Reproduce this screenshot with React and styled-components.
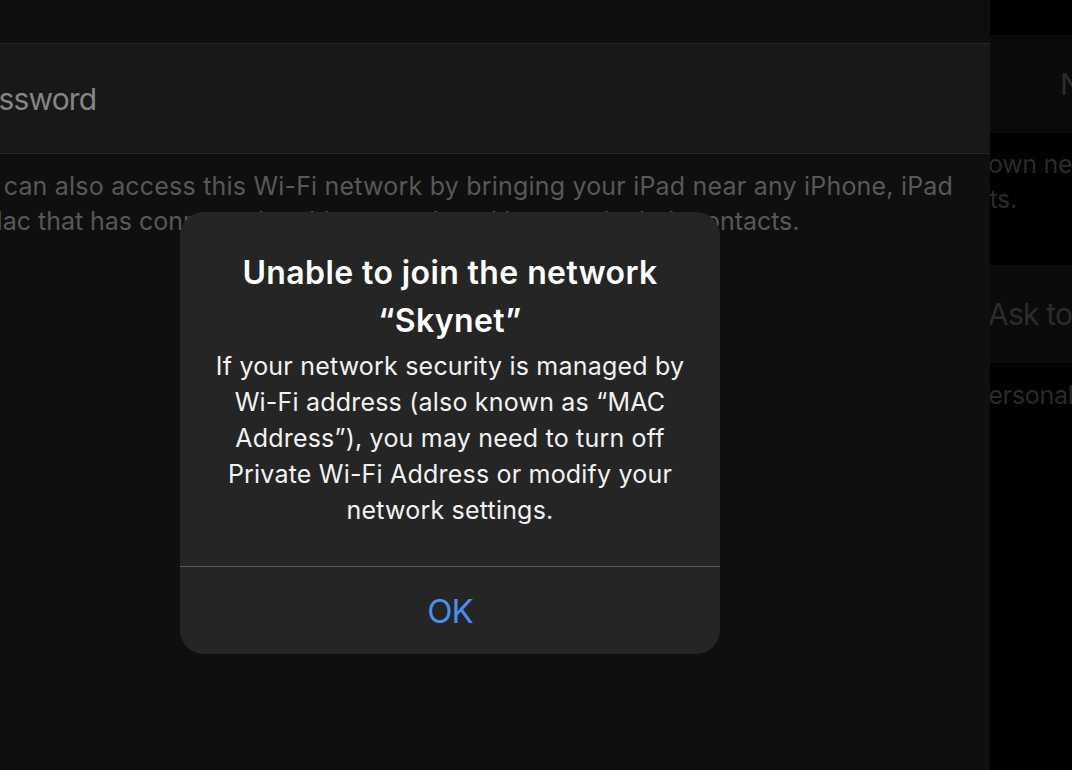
import React from 'react';
import styled, {createGlobalStyle} from "styled-components";

const Global = createGlobalStyle`
  html, body {
    margin: 0;
    padding: 0;
    background: #000;
  }
  body {
    font-family: Inter, "Noto Sans", "Liberation Sans", sans-serif;
    -webkit-font-smoothing: antialiased;
  }
`;

const App = () => {
	return (<Screen>
			<Global />
			<Sheet>
				<TopGap />
				<FieldRow>
					<FieldLabel>Password</FieldLabel>
				</FieldRow>
				<SheetFooter>
					<FooterLine $shift={-49} $spacing={0.2}>You can also access this Wi-Fi network by bringing your iPad near any iPhone, iPad</FooterLine>
					<FooterLine $shift={-51} $spacing={-0.04}>or Mac that has connected to this network and has you in their contacts.</FooterLine>
				</SheetFooter>
			</Sheet>

			<Behind>
				<BehindCard $top={35}>
					<BehindTitle $shift={70}>Networks</BehindTitle>
				</BehindCard>
				<BehindNote $shift={-33} $top={14}>Known networks will be joined automatically.</BehindNote>
				<BehindNote $shift={-80}>hotspots.</BehindNote>
				<BehindCard $top={48}>
					<BehindTitle $shift={-2}>Ask to Join Networks</BehindTitle>
				</BehindCard>
				<BehindNote $shift={-17} $top={15}>Personal Hotspot</BehindNote>
			</Behind>

			<Alert>
				<AlertBody>
					<AlertTitle>Unable to join the network<br />“Skynet”</AlertTitle>
					<AlertMessage>
						If your network security is managed by<br />
						Wi-Fi address (also known as “MAC<br />
						Address”), you may need to turn off<br />
						Private Wi-Fi Address or modify your<br />
						network settings.
					</AlertMessage>
				</AlertBody>
				<AlertButton>OK</AlertButton>
			</Alert>
		</Screen>
	);
};

export default App;

const Screen = styled.div`
  position: relative;
  display: flex;
  width: 1072px;
  height: 770px;
  overflow: hidden;
  background: #000;
`;

const Sheet = styled.div`
  width: 990px;
  flex: none;
  display: flex;
  flex-direction: column;
  background: #0f0f0f;
  overflow: hidden;
`;

const TopGap = styled.div`
  height: 43px;
  background: #0e0e0e;
`;

const FieldRow = styled.div`
  height: 109px;
  display: flex;
  align-items: center;
  background: #181818;
  border-top: 1px solid #262626;
  border-bottom: 1px solid #262626;
`;

const FieldLabel = styled.span`
  margin-left: -36px;
  font-size: 30px;
  letter-spacing: -0.8px;
  color: #858585;
  white-space: nowrap;
`;

const SheetFooter = styled.div`
  margin-top: 15px;
  display: flex;
  flex-direction: column;
`;

const FooterLine = styled.div`
  margin-left: ${({$shift}) => $shift}px;
  font-size: 25px;
  letter-spacing: ${({$spacing}) => $spacing}px;
  line-height: 35px;
  color: #585858;
  white-space: nowrap;
`;

const Behind = styled.div`
  flex: 1;
  display: flex;
  flex-direction: column;
  overflow: hidden;
  background: #000;
`;

const BehindCard = styled.div`
  margin-top: ${({$top}) => $top}px;
  height: 98px;
  display: flex;
  align-items: center;
  background: #0b0b0b;
`;

const BehindTitle = styled.span`
  margin-left: ${({$shift}) => $shift}px;
  font-size: 30px;
  letter-spacing: -0.8px;
  color: #2c2c2c;
  white-space: nowrap;
`;

const BehindNote = styled.div`
  margin: ${({$top}) => $top || 0}px 0 0 ${({$shift}) => $shift}px;
  font-size: 25px;
  letter-spacing: -0.3px;
  line-height: 35px;
  color: #2a2a2a;
  white-space: nowrap;
`;

const Alert = styled.div`
  position: absolute;
  left: 180px;
  top: 212px;
  width: 540px;
  display: flex;
  flex-direction: column;
  background: #252525;
  border-radius: 24px;
  overflow: hidden;
`;

const AlertBody = styled.div`
  padding: 37px 20px 38px;
  text-align: center;
  border-bottom: 1px solid #5a5a5a;
`;

const AlertTitle = styled.h2`
  margin: 0;
  font-size: 32px;
  font-weight: 600;
  letter-spacing: 0.4px;
  line-height: 48px;
  color: #fff;
  white-space: nowrap;
`;

const AlertMessage = styled.p`
  margin: 3px 0 0;
  font-size: 25px;
  letter-spacing: 0.2px;
  line-height: 36px;
  color: #f2f2f2;
  white-space: nowrap;
`;

const AlertButton = styled.button`
  height: 87px;
  border: none;
  background: transparent;
  font-family: inherit;
  font-size: 33px;
  letter-spacing: -1px;
  color: #4a8fe8;
  cursor: pointer;
`;
